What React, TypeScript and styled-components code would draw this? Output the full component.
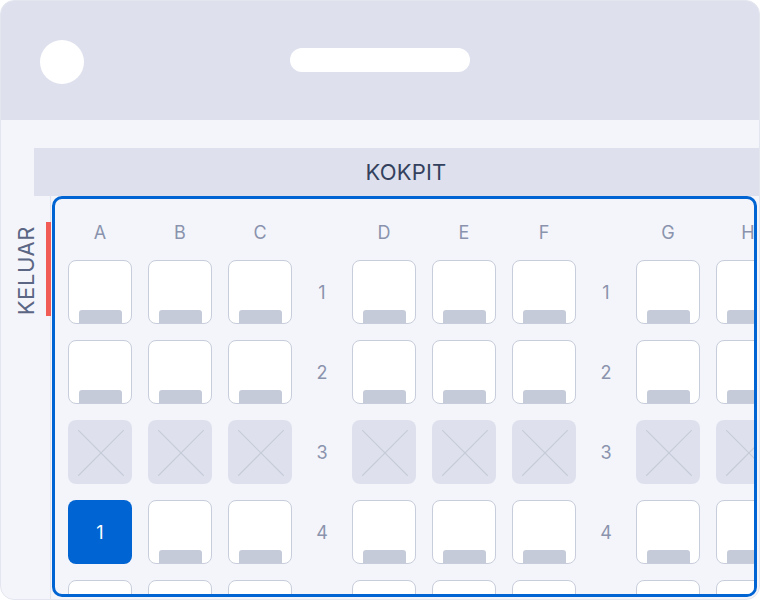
import styled, { createGlobalStyle } from 'styled-components';

type SeatState = 'open' | 'blocked' | 'selected';

const GlobalStyle = createGlobalStyle`
  body {
    margin: 0;
    background: #ffffff;
    font-family: Inter, "Noto Sans", "Liberation Sans", sans-serif;
  }
`;

const Card = styled.div`
  width: 760px;
  height: 600px;
  box-sizing: border-box;
  border: 1px solid #e3e6ee;
  border-radius: 14px;
  overflow: hidden;
  background: #f4f5fa;
  display: flex;
  flex-direction: column;
`;

const Header = styled.div`
  height: 119px;
  flex-shrink: 0;
  background: #dee1ed;
  display: grid;
  grid-template-columns: 1fr auto 1fr;
  align-items: start;
  padding-top: 39px;
  box-sizing: border-box;
`;

const Avatar = styled.div`
  width: 44px;
  height: 44px;
  border-radius: 50%;
  background: #ffffff;
  margin-left: 39px;
`;

const TitlePill = styled.div`
  width: 180px;
  height: 24px;
  border-radius: 12px;
  background: #ffffff;
  margin-top: 8px;
`;

const Body = styled.div`
  flex: 1;
  padding-top: 28px;
  display: flex;
  flex-direction: column;
  min-height: 0;
`;

const CockpitBar = styled.div`
  margin-left: 33px;
  width: 744px;
  height: 48px;
  flex-shrink: 0;
  background: #dee1ed;
  display: flex;
  align-items: center;
  justify-content: center;
  color: #34415e;
  font-size: 22px;
  letter-spacing: 0.2px;
`;

const Deck = styled.div`
  display: flex;
  flex: 1;
  min-height: 0;
`;

const ExitColumn = styled.div`
  width: 50px;
  box-sizing: border-box;
  border-right: 1px solid #e0e3eb;
  display: flex;
  justify-content: flex-end;
  align-items: flex-start;
  padding-top: 26px;
  gap: 6px;
`;

const ExitLabel = styled.span`
  writing-mode: vertical-rl;
  transform: rotate(180deg);
  color: #5b6684;
  font-size: 22px;
  letter-spacing: 0.6px;
  line-height: 22px;
  margin-top: 4px;
  margin-right: 3px;
`;

const ExitMark = styled.div`
  width: 5px;
  height: 94px;
  background: #f25c56;
  margin-right: -1px;
`;

const SeatMap = styled.div`
  margin-left: 1px;
  width: 705px;
  height: 401px;
  box-sizing: border-box;
  border: 3px solid #0064d2;
  border-radius: 10px;
  overflow: hidden;
  padding: 21px 0 0 13px;
`;

const SeatGrid = styled.div`
  display: grid;
  grid-template-columns: 64px 64px 64px 28px 64px 64px 64px 28px 64px 64px 64px;
  grid-auto-rows: 64px;
  grid-template-rows: 24px;
  gap: 16px;
`;

const ColumnLetter = styled.div`
  display: flex;
  align-items: center;
  justify-content: center;
  color: #8a93ad;
  font-size: 18px;
`;

const RowNumber = styled.div`
  display: flex;
  align-items: center;
  justify-content: center;
  color: #8a93ad;
  font-size: 18px;
`;

const Seat = styled.div<{ $state: SeatState }>`
  box-sizing: border-box;
  width: 64px;
  height: 64px;
  border-radius: 8px;
  border: 1px solid ${p => (p.$state === 'open' ? '#c8cddb' : 'transparent')};
  background: ${p =>
    p.$state === 'selected' ? '#0064d2' : p.$state === 'blocked' ? '#dee1ed' : '#ffffff'};
  display: flex;
  align-items: ${p => (p.$state === 'open' ? 'flex-end' : 'center')};
  justify-content: center;
  color: #ffffff;
  font-size: 18px;
`;

const SeatBack = styled.div`
  width: 43px;
  height: 13px;
  border-radius: 3px 3px 0 0;
  background: #c5cbd9;
`;

const columns = ['A', 'B', 'C', '', 'D', 'E', 'F', '', 'G', 'H', 'I'];
const rows = [1, 2, 3, 4, 5];

function seatState(row: number, col: string): SeatState {
  if (row === 3) return 'blocked';
  if (row === 4 && col === 'A') return 'selected';
  return 'open';
}

function BlockedCross() {
  return (
    <svg width="64" height="64" viewBox="0 0 64 64">
      <path d="M9.5 9.5 L56.5 56.5 M56.5 9.5 L9.5 56.5" stroke="#c6cbd9" strokeWidth="1.2" fill="none" />
    </svg>
  );
}

export default function App() {
  return (
    <>
      <GlobalStyle />
      <Card>
        <Header>
          <Avatar />
          <TitlePill />
          <div />
        </Header>
        <Body>
          <CockpitBar>KOKPIT</CockpitBar>
          <Deck>
            <ExitColumn>
              <ExitLabel>KELUAR</ExitLabel>
              <ExitMark />
            </ExitColumn>
            <SeatMap>
              <SeatGrid>
                {columns.map((c, i) => (
                  <ColumnLetter key={`h${i}`}>{c}</ColumnLetter>
                ))}
                {rows.map(row =>
                  columns.map((c, i) => {
                    if (!c) return <RowNumber key={`${row}-${i}`}>{row}</RowNumber>;
                    const state = seatState(row, c);
                    return (
                      <Seat key={`${row}-${c}`} $state={state}>
                        {state === 'open' && <SeatBack />}
                        {state === 'blocked' && <BlockedCross />}
                        {state === 'selected' && '1'}
                      </Seat>
                    );
                  })
                )}
              </SeatGrid>
            </SeatMap>
          </Deck>
        </Body>
      </Card>
    </>
  );
}
